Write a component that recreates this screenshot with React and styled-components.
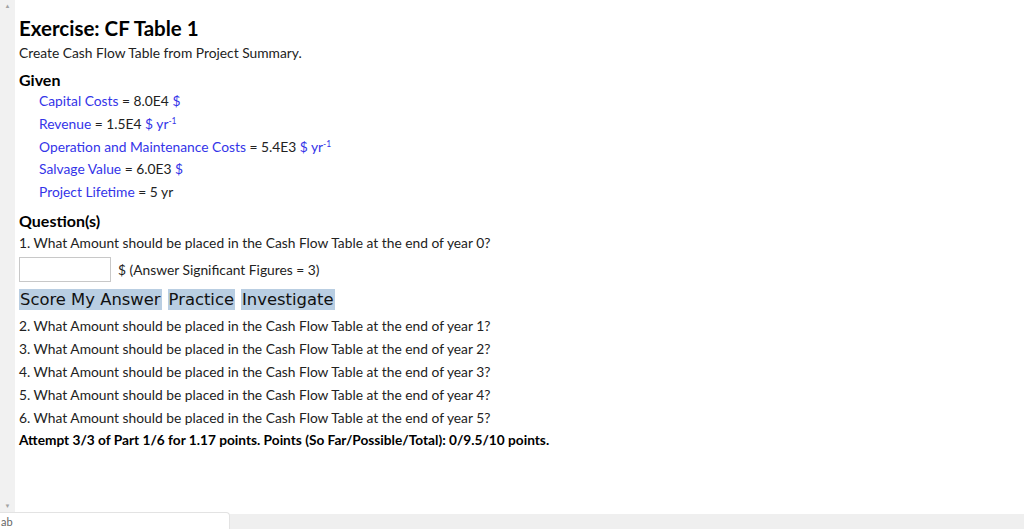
import React from "react";
import styled, { createGlobalStyle } from "styled-components";

const Global = createGlobalStyle`
  html, body { margin: 0; padding: 0; background: #fff; }
  body { font-family: Lato, "Open Sans", sans-serif; color: #111; overflow: hidden; }
`;

const givens = [
  { label: "Capital Costs", value: "8.0E4", unit: "$" },
  { label: "Revenue", value: "1.5E4", unit: "$", per: true },
  { label: "Operation and Maintenance Costs", value: "5.4E3", unit: "$", per: true },
  { label: "Salvage Value", value: "6.0E3", unit: "$" },
  { label: "Project Lifetime", value: "5", unit: "yr", plainUnit: true },
];

const App = () => {
  return (
    <Page>
      <Global />
      <Main>
        <ScrollStrip>
          <Arrow>▲</Arrow>
          <Arrow>▼</Arrow>
        </ScrollStrip>
        <Content>
          <Title>Exercise: CF Table 1</Title>
          <Line>Create Cash Flow Table from Project Summary.</Line>
          <Heading>Given</Heading>
          <GivenList>
            {givens.map((g) => (
              <GivenRow key={g.label}>
                <Blue>{g.label}</Blue> = {g.value}{" "}
                {g.plainUnit ? g.unit : <Blue>{g.unit}</Blue>}
                {g.per && (
                  <>
                    {" "}
                    <Blue>yr<sup>-1</sup></Blue>
                  </>
                )}
              </GivenRow>
            ))}
          </GivenList>
          <Heading>Question(s)</Heading>
          <Line>1. What Amount should be placed in the Cash Flow Table at the end of year 0?</Line>
          <AnswerRow>
            <AnswerInput type="text" />
            <span>$ (Answer Significant Figures = 3)</span>
          </AnswerRow>
          <Buttons>
            <Btn>Score My Answer</Btn>
            <Btn>Practice</Btn>
            <Btn>Investigate</Btn>
          </Buttons>
          {[1, 2, 3, 4, 5].map((y) => (
            <Line key={y}>
              {y + 1}. What Amount should be placed in the Cash Flow Table at the end of year {y}?
            </Line>
          ))}
          <Attempt>
            Attempt 3/3 of Part 1/6 for 1.17 points. Points (So Far/Possible/Total): 0/9.5/10 points.
          </Attempt>
        </Content>
      </Main>
      <BottomBar>
        <Tab>ab</Tab>
      </BottomBar>
    </Page>
  );
};

const Page = styled.div`
  width: 1024px;
  height: 529px;
  display: flex;
  flex-direction: column;
`;

const Main = styled.div`
  flex: 1;
  display: flex;
  min-height: 0;
`;

const ScrollStrip = styled.div`
  width: 15px;
  background: #f1f1f1;
  display: flex;
  flex-direction: column;
  justify-content: space-between;
  align-items: center;
  padding: 2px 0 4px;
`;

const Arrow = styled.span`
  font-size: 6px;
  color: #a3a3a3;
  line-height: 8px;
`;

const Content = styled.div`
  flex: 1;
  padding: 15px 0 0 4px;
`;

const Title = styled.h1`
  margin: 0;
  font-size: 20.5px;
  font-weight: 700;
  line-height: 26px;
  color: #000;
`;

const Line = styled.div`
  font-size: 13.8px;
  line-height: 23px;
  color: #222;
  white-space: nowrap;
`;

const Heading = styled.div`
  font-size: 16px;
  font-weight: 700;
  line-height: 20px;
  margin-top: 6px;
  color: #000;
`;

const GivenList = styled.div`
  padding-left: 20px;
  margin-bottom: 7px;
`;

const GivenRow = styled.div`
  font-size: 13.8px;
  line-height: 22.8px;
  color: #222;
  sup {
    font-size: 8.5px;
    vertical-align: 5px;
    line-height: 0;
  }
`;

const Blue = styled.span`
  color: #3434e8;
`;

const AnswerRow = styled.div`
  display: flex;
  align-items: center;
  gap: 7px;
  font-size: 13.8px;
  color: #222;
  margin-top: 3px;
`;

const AnswerInput = styled.input`
  width: 92px;
  height: 25px;
  box-sizing: border-box;
  border: 1px solid #c8c8c8;
  padding: 0;
  margin: 0;
`;

const Buttons = styled.div`
  display: flex;
  gap: 6px;
  margin-top: 7px;
  margin-bottom: 4px;
`;

const Btn = styled.div`
  background: #b9cee2;
  font-family: "DejaVu Sans", Verdana, sans-serif;
  font-size: 16.4px;
  line-height: 21px;
  padding: 0 1px;
  color: #111;
`;

const Attempt = styled.div`
  font-size: 13.7px;
  font-weight: 700;
  line-height: 22px;
  color: #000;
  white-space: nowrap;
`;

const BottomBar = styled.div`
  height: 15px;
  background: #efefef;
  position: relative;
`;

const Tab = styled.div`
  position: absolute;
  left: 0;
  bottom: 0;
  width: 230px;
  height: 17px;
  background: #fff;
  border: 1px solid #e3e3e3;
  border-left: none;
  border-bottom: none;
  border-top-right-radius: 4px;
  box-sizing: border-box;
  font-size: 11px;
  color: #666;
  line-height: 17px;
  padding-left: 1px;
  overflow: hidden;
`;

export default App;
